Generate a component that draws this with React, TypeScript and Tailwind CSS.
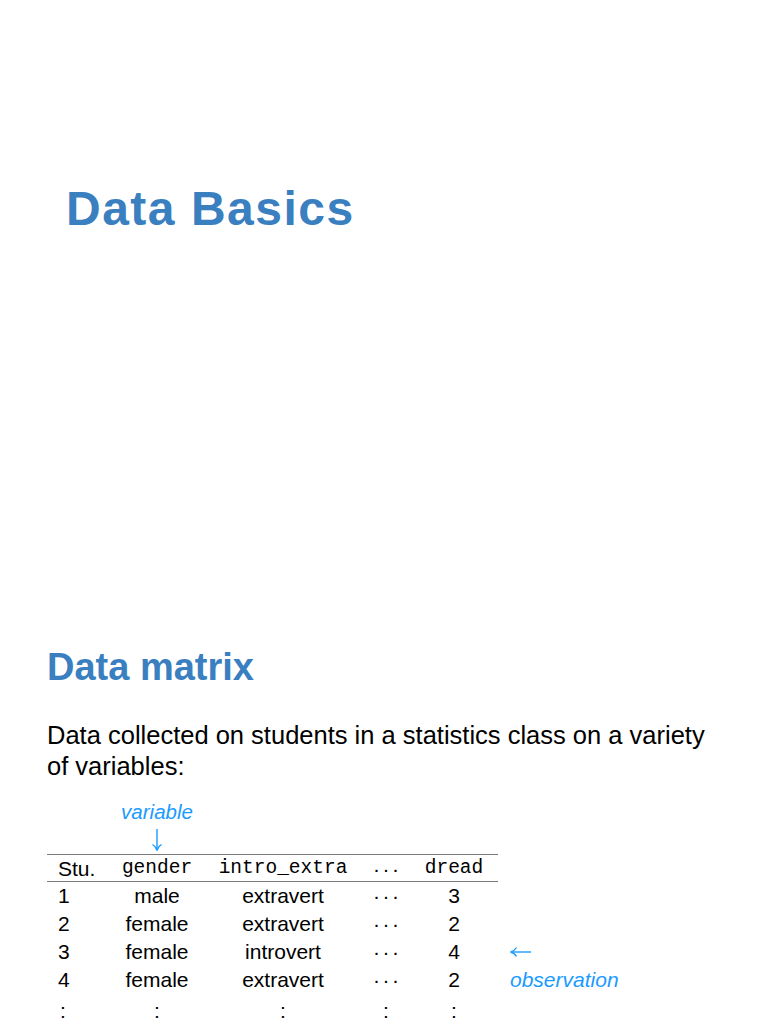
import React from "react";

const rows = [
  ["1", "male", "extravert", "3"],
  ["2", "female", "extravert", "2"],
  ["3", "female", "introvert", "4"],
  ["4", "female", "extravert", "2"],
];

function DownArrow() {
  return (
    <svg width="12" height="24" viewBox="0 0 12 24" className="mx-auto block">
      <path d="M6 1 V22" stroke="#1a9bff" strokeWidth="1.4" fill="none" />
      <path d="M1.5 16.5 Q5 18.5 6 22.5 Q7 18.5 10.5 16.5" stroke="#1a9bff" strokeWidth="1.3" fill="none" />
    </svg>
  );
}

function LeftArrow() {
  return (
    <svg width="22" height="12" viewBox="0 0 22 12" className="block">
      <path d="M1 6 H21" stroke="#1a9bff" strokeWidth="1.4" fill="none" />
      <path d="M6.5 1.5 Q4.5 5 0.5 6 Q4.5 7 6.5 10.5" stroke="#1a9bff" strokeWidth="1.3" fill="none" />
    </svg>
  );
}

const mono = "font-['Liberation_Mono',monospace] text-[19.5px]";
const head = "h-[28px] border-y-[1.5px] border-[#7a7a7a] leading-[25px] pt-[1px]";
const dots = "tracking-[2.5px] pl-[2.5px]";

export default function App() {
  return (
    <div className="w-[768px] bg-white text-black font-['Liberation_Sans',Arial,sans-serif]">
      {/* Slide 1 */}
      <section className="h-[576px] pl-[66px] pt-[185px]">
        <h1 className="text-[48px] leading-none font-bold text-[#3a7fc0] tracking-[1.5px]">Data Basics</h1>
      </section>

      {/* Slide 2 */}
      <section className="h-[448px] overflow-hidden pl-[47px] pt-[72px]">
        <h2 className="text-[38px] leading-none font-bold text-[#3a7fc0]">Data matrix</h2>
        <p className="mt-[34px] text-[25.5px] leading-[31px]">
          Data collected on students in a statistics class on a variety
          <br />
          of variables:
        </p>

        <div className="mt-[16px] grid grid-cols-[63px_94px_158px_48px_88px_130px] text-[21px] leading-[28px]">
          {/* label rows */}
          <div />
          <div className="text-center italic text-[#1a9bff] text-[20.5px]">variable</div>
          <div />
          <div />
          <div />
          <div />
          <div />
          <div className="flex h-[28px] items-center justify-center">
            <DownArrow />
          </div>
          <div />
          <div />
          <div />
          <div />

          {/* header */}
          <div className={`${head} pl-[11px]`}>Stu.</div>
          <div className={`${head} text-center ${mono}`}>gender</div>
          <div className={`${head} text-center ${mono}`}>intro_extra</div>
          <div className={`${head} text-center ${dots}`}>···</div>
          <div className={`${head} text-center ${mono}`}>dread</div>
          <div />

          {rows.map((r, i) => (
            <React.Fragment key={i}>
              <div className="pl-[11px]">{r[0]}</div>
              <div className="text-center">{r[1]}</div>
              <div className="text-center">{r[2]}</div>
              <div className={`text-center ${dots}`}>···</div>
              <div className="text-center">{r[3]}</div>
              <div className="pl-[12px] italic text-[#1a9bff]">
                {i === 2 ? (
                  <div className="flex h-[28px] items-center">
                    <LeftArrow />
                  </div>
                ) : i === 3 ? (
                  "observation"
                ) : null}
              </div>
            </React.Fragment>
          ))}

          <div className="pl-[13px] pt-[7px] leading-[20px]">:</div>
          <div className="text-center pt-[7px] leading-[20px]">:</div>
          <div className="text-center pt-[7px] leading-[20px]">:</div>
          <div className="text-center pt-[7px] leading-[20px]">:</div>
          <div className="text-center pt-[7px] leading-[20px]">:</div>
          <div />
        </div>
      </section>
    </div>
  );
}
